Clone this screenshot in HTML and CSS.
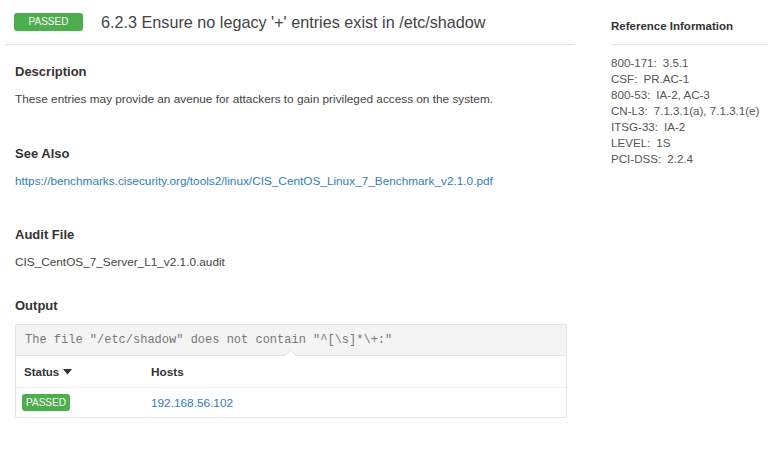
FILE: index.html
```html
<!DOCTYPE html>
<html>
<head>
<meta charset="utf-8">
<link rel="stylesheet" href="styles.css">
</head>
<body>
<div class="page">
  <div class="main">
    <div class="header">
      <span class="badge badge-lg">PASSED</span>
      <h1 class="title">6.2.3 Ensure no legacy '+' entries exist in /etc/shadow</h1>
    </div>
    <div class="section sec-desc">
      <h2 class="sec-title">Description</h2>
      <p class="sec-text">These entries may provide an avenue for attackers to gain privileged access on the system.</p>
    </div>
    <div class="section sec-see">
      <h2 class="sec-title">See Also</h2>
      <p class="sec-text"><a class="link" href="#">https://benchmarks.cisecurity.org/tools2/linux/CIS_CentOS_Linux_7_Benchmark_v2.1.0.pdf</a></p>
    </div>
    <div class="section sec-audit">
      <h2 class="sec-title">Audit File</h2>
      <p class="sec-text">CIS_CentOS_7_Server_L1_v2.1.0.audit</p>
    </div>
    <div class="section sec-output">
      <h2 class="sec-title">Output</h2>
      <div class="outbox">
        <div class="outtext">The file "/etc/shadow" does not contain "^[\s]*\+:"</div>
        <span class="notch"></span>
        <div class="trow thead">
          <div class="col-status">Status <svg class="caret" width="9" height="6" viewBox="0 0 9 6"><path d="M0 0 H9 L4.5 5.5 Z" fill="#333"/></svg></div>
          <div class="col-hosts">Hosts</div>
        </div>
        <div class="trow tbody">
          <div class="col-status"><span class="badge badge-sm">PASSED</span></div>
          <div class="col-hosts"><a class="link" href="#">192.168.56.102</a></div>
        </div>
      </div>
    </div>
  </div>
  <div class="side">
    <h3 class="side-title">Reference Information</h3>
    <ul class="refs">
      <li><span class="rk">800-171:</span>3.5.1</li>
      <li><span class="rk">CSF:</span>PR.AC-1</li>
      <li><span class="rk">800-53:</span>IA-2, AC-3</li>
      <li><span class="rk">CN-L3:</span>7.1.3.1(a), 7.1.3.1(e)</li>
      <li><span class="rk">ITSG-33:</span>IA-2</li>
      <li><span class="rk">LEVEL:</span>1S</li>
      <li><span class="rk">PCI-DSS:</span>2.2.4</li>
    </ul>
  </div>
</div>
</body>
</html>
```
FILE: styles.css
```css
* { box-sizing: border-box; }
html, body { margin: 0; padding: 0; background: #fff; }
body {
  font-family: "Liberation Sans", Arial, sans-serif;
  color: #555;
  font-size: 11.8px;
}
.page {
  display: flex;
  width: 768px;
  height: 457px;
  overflow: hidden;
}
.main {
  width: 569px;
  margin-left: 5px;
}
.header {
  display: flex;
  align-items: center;
  gap: 18px;
  height: 45px;
  padding: 0 0 1px 9px;
  border-bottom: 1px solid #e2e2e2;
}
.badge {
  display: inline-flex;
  align-items: center;
  justify-content: center;
  background: #4cae4c;
  color: #fff;
  border-radius: 3px;
  font-family: "Liberation Sans", Arial, sans-serif;
}
.badge-lg {
  width: 69px;
  height: 18px;
  font-size: 10px;
}
.badge-sm {
  width: 48px;
  height: 17px;
  font-size: 10px;
}
.title {
  margin: 0;
  font-size: 16.2px;
  font-weight: normal;
  color: #444;
  line-height: 20px;
}
.section { padding-left: 10px; }
.sec-title {
  margin: 0;
  font-size: 13px;
  line-height: 16px;
  font-weight: bold;
  color: #333;
}
.sec-text {
  margin: 11px 0 0;
  font-size: 11.8px;
  line-height: 16px;
  color: #444;
}
.sec-desc { padding-top: 19px; }
.sec-see { padding-top: 39px; }
.sec-audit { padding-top: 38px; }
.sec-output { padding-top: 28px; }
.link { color: #2f7dbd; text-decoration: none; }
.outbox {
  position: relative;
  margin-top: 10px;
  width: 552px;
  border: 1px solid #e4e4e4;
  border-radius: 2px;
}
.outtext {
  height: 31px;
  background: #f4f4f4;
  border-bottom: 1px solid #e4e4e4;
  padding: 0 9px;
  font-family: "Liberation Mono", "Courier New", monospace;
  font-size: 12px;
  line-height: 30px;
  color: #777;
}
.notch {
  position: absolute;
  left: 270px;
  top: 26px;
  width: 9px;
  height: 9px;
  background: #fff;
  border-left: 1px solid #e4e4e4;
  border-top: 1px solid #e4e4e4;
  transform: rotate(45deg);
}
.trow {
  display: flex;
  align-items: center;
  padding-left: 8px;
}
.thead {
  height: 32px;
  border-bottom: 1px dotted #e2e2e2;
  font-weight: bold;
  color: #333;
  font-size: 11.5px;
}
.tbody {
  height: 29px;
  padding-left: 6px;
}
.col-status { width: 127px; display: flex; align-items: center; gap: 4px; }
.tbody .col-status { width: 129px; }
.caret { display: block; margin-top: 1px; }
.col-hosts { font-size: 11.8px; }
.side {
  margin-left: 37px;
  flex: 1;
}
.side-title {
  margin: 0;
  height: 45px;
  padding-top: 19px;
  font-size: 11.5px;
  line-height: 14px;
  font-weight: bold;
  color: #333;
  border-bottom: 1px solid #e2e2e2;
}
.refs {
  list-style: none;
  margin: 10px 0 0;
  padding: 0;
}
.refs li {
  font-size: 11.6px;
  line-height: 16px;
  color: #555;
}
.rk { margin-right: 6px; }
```
